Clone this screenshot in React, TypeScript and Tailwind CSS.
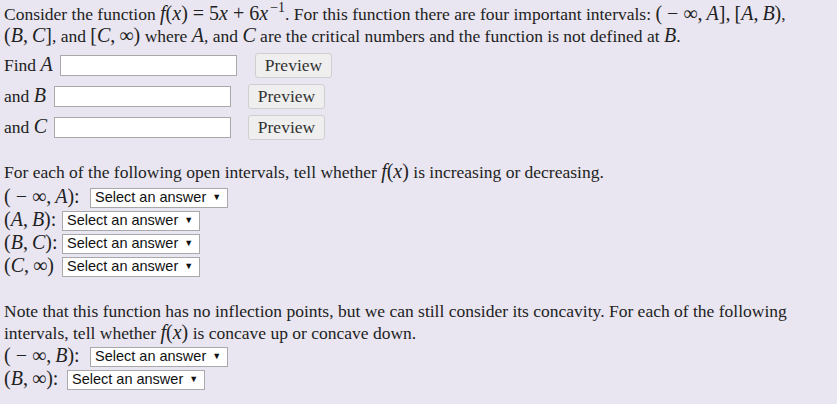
import React from "react";

const M = ({ children }: { children: React.ReactNode }) => (
  <span className="italic font-['Liberation_Serif',serif] text-[20px] leading-[20px]">{children}</span>
);
const R = ({ children }: { children: React.ReactNode }) => (
  <span className="font-['Liberation_Serif',serif] text-[20px] leading-[20px]">{children}</span>
);
const Op = ({ children }: { children: React.ReactNode }) => (
  <span className="font-['Liberation_Serif',serif] text-[20px] leading-[20px] mx-[5px]">{children}</span>
);
const Cm = () => <span className="font-['Liberation_Serif',serif] text-[20px] leading-[20px] mr-[4px]">,</span>;
const NegInf = () => (
  <>
    <R>(</R>
    <Op>−</Op>
    <R>∞</R>
    <Cm />
  </>
);

const Sel = () => (
  <span className="inline-flex items-center h-[20px] w-[138px] border border-[#a9a9a9] bg-white pl-[4px] pr-[6px] font-['Liberation_Sans',Arial,sans-serif] text-[14.5px] text-[#111] leading-none">
    <span>Select an answer</span>
    <span className="ml-[6px] text-[9px]">▼</span>
  </span>
);

const Field = ({ btnMl }: { btnMl: string }) => (
  <>
    <span className="inline-block w-[177px] h-[21px] border border-[#a9a9a9] bg-white" />
    <span
      className={`${btnMl} inline-flex items-center justify-center w-[77px] h-[25px] rounded-[3px] border border-[#cfcfcf] bg-[#efefef] text-[17.5px] text-[#333]`}
    >
      Preview
    </span>
  </>
);

export default function App() {
  return (
    <div className="w-[837px] h-[404px] bg-[#e9e6f1] pl-[4px] pt-[3px] font-['Liberation_Serif',serif] text-[17.5px] text-[#222] whitespace-nowrap overflow-hidden">
      <div className="leading-[22px]">
        <div className="h-[22px]">
          Consider the function <M>f</M>
          <R>(</R>
          <M>x</M>
          <R>)</R>
          <Op>=</Op>
          <R>5</R>
          <M>x</M>
          <Op>+</Op>
          <R>6</R>
          <M>x</M>
          <span className="relative -top-[8px] text-[14px] leading-none ml-[2px]">−1</span>. For this function there are four important intervals:{" "}
          <NegInf />
          <M>A</M>
          <R>]</R>
          <Cm />
          <R>[</R>
          <M>A</M>
          <Cm />
          <M>B</M>
          <R>)</R>,
        </div>
        <div className="h-[22px]">
          <R>(</R>
          <M>B</M>
          <Cm />
          <M>C</M>
          <R>]</R>, and <R>[</R>
          <M>C</M>
          <Cm />
          <R>∞)</R> where <M>A</M>, and <M>C</M> are the critical numbers and the function is not defined at <M>B</M>.
        </div>
      </div>

      <div className="mt-[6px] flex flex-col gap-[6px]">
        <div className="h-[25px] flex items-center">
          <span className="w-[56px] shrink-0">
            Find <M>A</M>
          </span>
          <Field btnMl="ml-[18px]" />
        </div>
        <div className="h-[25px] flex items-center">
          <span className="w-[50px] shrink-0">
            and <M>B</M>
          </span>
          <Field btnMl="ml-[17px]" />
        </div>
        <div className="h-[25px] flex items-center">
          <span className="w-[50px] shrink-0">
            and <M>C</M>
          </span>
          <Field btnMl="ml-[17px]" />
        </div>
      </div>

      <div className="mt-[21px] leading-[22px] h-[22px]">
        For each of the following open intervals, tell whether <M>f</M>
        <R>(</R>
        <M>x</M>
        <R>)</R> is increasing or decreasing.
      </div>
      <div className="mt-[3px] flex flex-col">
        <div className="h-[23px] flex items-center">
          <span className="w-[86px] shrink-0">
            <NegInf />
            <M>A</M>
            <R>):</R>
          </span>
          <Sel />
        </div>
        <div className="h-[23px] flex items-center">
          <span className="w-[58px] shrink-0">
            <R>(</R>
            <M>A</M>
            <Cm />
            <M>B</M>
            <R>):</R>
          </span>
          <Sel />
        </div>
        <div className="h-[23px] flex items-center">
          <span className="w-[58px] shrink-0">
            <R>(</R>
            <M>B</M>
            <Cm />
            <M>C</M>
            <R>):</R>
          </span>
          <Sel />
        </div>
        <div className="h-[23px] flex items-center">
          <span className="w-[58px] shrink-0">
            <R>(</R>
            <M>C</M>
            <Cm />
            <R>∞)</R>
          </span>
          <Sel />
        </div>
      </div>

      <div className="mt-[22px] leading-[22px]">
        <div className="h-[22px]">
          Note that this function has no inflection points, but we can still consider its concavity. For each of the following
        </div>
        <div className="h-[22px]">
          intervals, tell whether <M>f</M>
          <R>(</R>
          <M>x</M>
          <R>)</R> is concave up or concave down.
        </div>
      </div>
      <div className="mt-[1px] flex flex-col">
        <div className="h-[23px] flex items-center">
          <span className="w-[86px] shrink-0">
            <NegInf />
            <M>B</M>
            <R>):</R>
          </span>
          <Sel />
        </div>
        <div className="h-[23px] flex items-center">
          <span className="w-[63px] shrink-0">
            <R>(</R>
            <M>B</M>
            <Cm />
            <R>∞):</R>
          </span>
          <Sel />
        </div>
      </div>
    </div>
  );
}
